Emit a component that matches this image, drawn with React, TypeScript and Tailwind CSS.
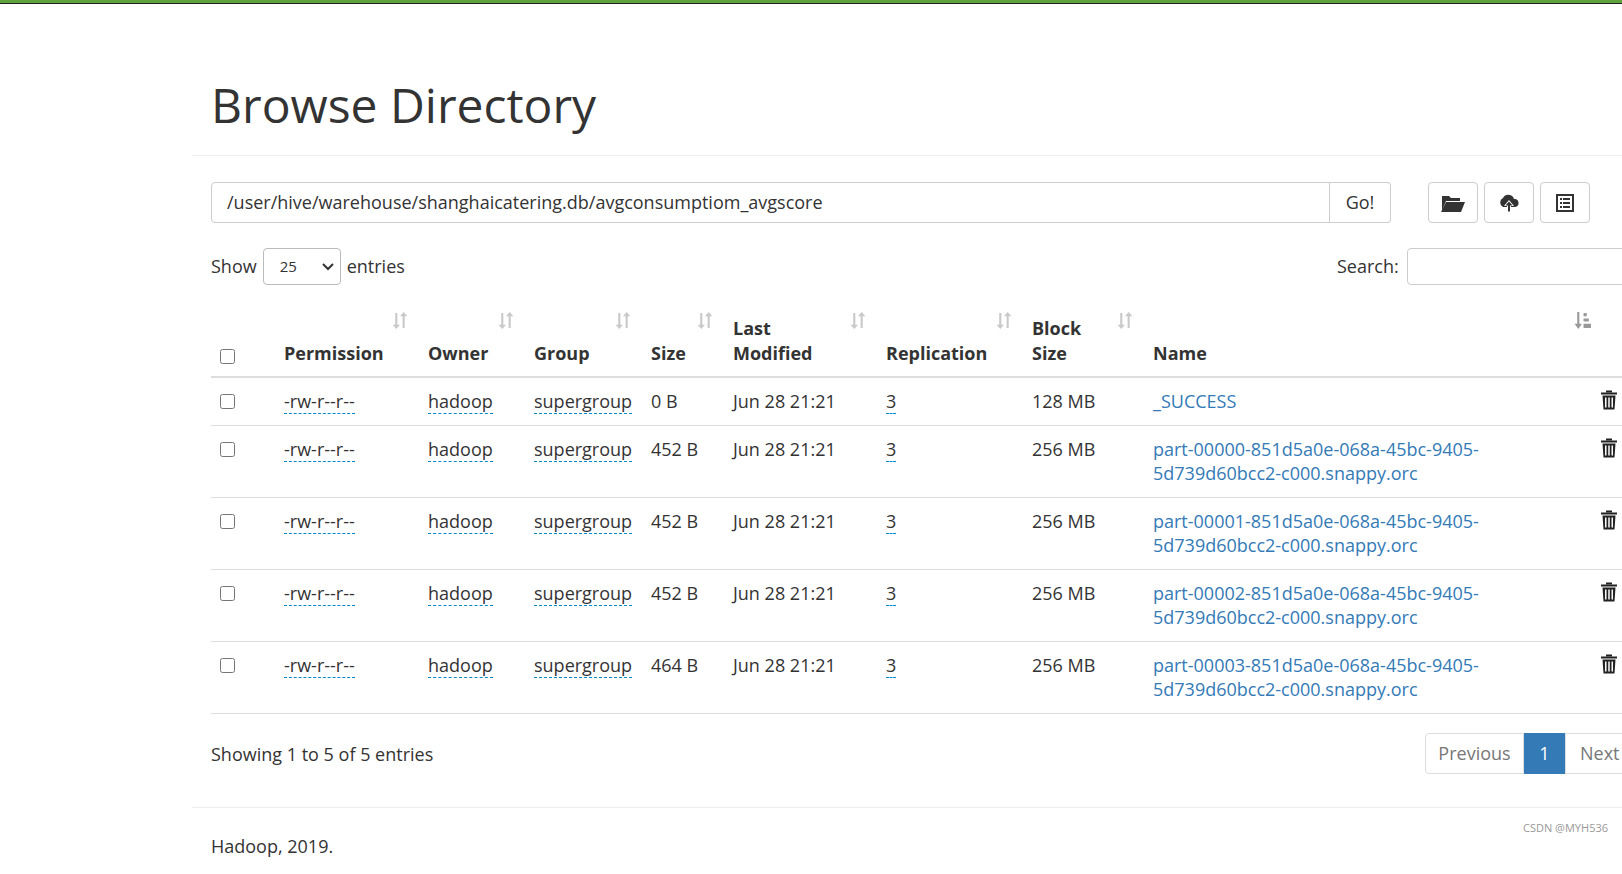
import React from 'react';

const rows = [
  { size: '0 B', block: '128 MB', name: ['_SUCCESS'] },
  { size: '452 B', block: '256 MB', name: ['part-00000-851d5a0e-068a-45bc-9405-', '5d739d60bcc2-c000.snappy.orc'] },
  { size: '452 B', block: '256 MB', name: ['part-00001-851d5a0e-068a-45bc-9405-', '5d739d60bcc2-c000.snappy.orc'] },
  { size: '452 B', block: '256 MB', name: ['part-00002-851d5a0e-068a-45bc-9405-', '5d739d60bcc2-c000.snappy.orc'] },
  { size: '464 B', block: '256 MB', name: ['part-00003-851d5a0e-068a-45bc-9405-', '5d739d60bcc2-c000.snappy.orc'] },
];

const cols: [React.ReactNode, number][] = [
  ['Permission', 144],
  ['Owner', 106],
  ['Group', 117],
  ['Size', 82],
  [<>Last<br />Modified</>, 153],
  ['Replication', 146],
  [<>Block<br />Size</>, 121],
];

function SortIcon() {
  return (
    <svg width="19" height="19" viewBox="0 0 18 18" className="text-[#c9c9c9]">
      <path d="M4 2v11H1.5L5 17l3.5-4H6V2z" fill="currentColor" />
      <path d="M13 16V5h2.5L12 1 8.5 5H11v11z" fill="currentColor" />
    </svg>
  );
}

function Trash() {
  return (
    <svg width="16" height="20" viewBox="0 0 16 19" fill="#222">
      <rect x="0" y="2" width="16" height="2" />
      <rect x="5" y="0" width="6" height="2" />
      <path d="M1.5 5h13l-1 14h-11zM4 7v10h1.5V7zm3.25 0v10h1.5V7zM10.5 7v10H12V7z" fillRule="evenodd" />
    </svg>
  );
}

const link = 'border-b border-dashed border-[#0088cc] text-[#333]';

export default function App() {
  return (
    <div className="w-[1622px] h-[874px] overflow-hidden bg-white text-[18px] text-[#333] relative" style={{ fontFamily: '"Open Sans", "Noto Sans", sans-serif' }}>
      <div className="h-[4px] bg-[#5fa33e] border-b border-[#222]" />
      <div className="ml-[192px] w-[1450px] pl-[19px]">
        <h1 className="text-[48px] mt-[71px] mb-[20px] leading-[60px] font-normal">Browse Directory</h1>
        <div className="border-t border-[#eee] -ml-[19px]" />
        <div className="flex items-center mt-[26px]">
          <div className="w-[1119px] h-[41px] border border-[#ccc] rounded-l-[4px] px-[15px] flex items-center">/user/hive/warehouse/shanghaicatering.db/avgconsumptiom_avgscore</div>
          <div className="h-[41px] w-[61px] border border-l-0 border-[#ccc] rounded-r-[4px] flex items-center justify-center">Go!</div>
          <div className="ml-[37px] flex gap-[6px]">
            <div className="w-[50px] h-[41px] border border-[#ccc] rounded-[4px] flex items-center justify-center">
              <svg width="24" height="18" viewBox="0 0 24 18"><path d="M1 2h7l2 2h9v3H5L1 16z M5 8h19l-4 10H0z" fill="#333" /></svg>
            </div>
            <div className="w-[50px] h-[41px] border border-[#ccc] rounded-[4px] flex items-center justify-center">
              <svg width="22" height="20" viewBox="0 0 22 20">
                <path d="M5 14a5 5 0 0 1 0-9 6 6 0 0 1 11 1 4 4 0 0 1 1 8z" fill="#333" />
                <path d="M11 7l-5 6h3v6h4v-6h3z" fill="#fff" />
                <path d="M11 8.5l-3.5 4h2.5v6h2v-6h2.5z" fill="#333" />
              </svg>
            </div>
            <div className="w-[50px] h-[41px] border border-[#ccc] rounded-[4px] flex items-center justify-center">
              <svg width="18" height="18" viewBox="0 0 18 18"><rect x="0" y="0" width="18" height="18" fill="#333" /><rect x="2" y="2" width="14" height="14" fill="#fff" /><g fill="#333"><rect x="4" y="4" width="2" height="2" /><rect x="7" y="4" width="7" height="2" /><rect x="4" y="8" width="2" height="2" /><rect x="7" y="8" width="7" height="2" /><rect x="4" y="12" width="2" height="2" /><rect x="7" y="12" width="7" height="2" /></g></svg>
            </div>
          </div>
        </div>
        <div className="flex items-center mt-[25px]">
          <div className="flex items-center gap-[6px] w-[1126px]">
            Show
            <div className="w-[78px] h-[37px] border border-[#bbb] rounded-[4px] flex items-center justify-between pl-[16px] pr-[6px] text-[15px]">
              25
              <svg width="12" height="8" viewBox="0 0 12 8"><path d="M1 1l5 5 5-5" stroke="#333" strokeWidth="2" fill="none" /></svg>
            </div>
            entries
          </div>
          <div className="flex items-center gap-[8px]">
            Search:
            <div className="w-[220px] h-[37px] border border-[#ccc] rounded-[4px]" />
          </div>
        </div>
        <table className="mt-[20px] w-[1413px] border-collapse">
          <thead>
            <tr className="border-b-2 border-[#ddd] font-bold text-left">
              <th className="w-[73px] align-bottom pb-[12px] pl-[9px]"><input type="checkbox" className="w-[15px] h-[15px] block" /></th>
              {cols.map(([l, w], i) => (
                <th key={i} style={{ width: w }} className="align-bottom pb-[10px] relative h-[72px] whitespace-nowrap">
                  <span className="block leading-[25px]">{l}</span>
                  <span className="absolute right-[18px] top-[6px]"><SortIcon /></span>
                </th>
              ))}
              <th className="align-bottom pb-[10px] relative">
                <span className="block leading-[25px]">Name</span>
                <svg width="19" height="19" viewBox="0 0 18 18" className="absolute right-[32px] top-[6px]" fill="#999"><path d="M4 1v11H1.5L5 17l3.5-5H6V1zM10 2h3v3h-3zM10 7h5v3h-5zM10 12h7v4h-7z" /></svg>
              </th>
            </tr>
          </thead>
          <tbody>
            {rows.map((r, i) => (
              <tr key={i} className="border-b border-[#ddd] align-top leading-[24px]">
                <td className="pl-[9px] pt-[14px]"><input type="checkbox" className="w-[15px] h-[15px] block mt-[2px]" /></td>
                <td className="pt-[11px]"><span className={link}>-rw-r--r--</span></td>
                <td className="pt-[11px]"><span className={link}>hadoop</span></td>
                <td className="pt-[11px]"><span className={link}>supergroup</span></td>
                <td className="pt-[11px]">{r.size}</td>
                <td className="pt-[11px]">Jun 28 21:21</td>
                <td className="pt-[11px]"><span className={link}>3</span></td>
                <td className="pt-[11px]">{r.block}</td>
                <td className="pt-[11px] pb-[12px]">
                  <div className="flex justify-between pr-[7px]">
                    <div className="text-[#337ab7]">{r.name.map((n) => <div key={n}>{n}</div>)}</div>
                    <div className="pt-[1px]"><Trash /></div>
                  </div>
                </td>
              </tr>
            ))}
          </tbody>
        </table>
        <div className="flex mt-[19px]">
          <div className="pt-[8px] w-[1214px]">Showing 1 to 5 of 5 entries</div>
          <div className="flex h-[41px]">
            <div className="border border-[#ddd] rounded-l-[4px] w-[99px] flex items-center justify-center text-[#777]">Previous</div>
            <div className="bg-[#337ab7] text-white w-[41px] flex items-center justify-center">1</div>
            <div className="border border-[#ddd] px-[14px] flex items-center text-[#777]">Next</div>
          </div>
        </div>
      </div>
      <div className="ml-[192px] mt-[33px] border-t border-[#eee] pt-[25px] pl-[19px]">Hadoop, 2019.</div>
      <div className="absolute right-[14px] bottom-[38px] text-[11px] text-[#999]">CSDN @MYH536</div>
    </div>
  );
}
